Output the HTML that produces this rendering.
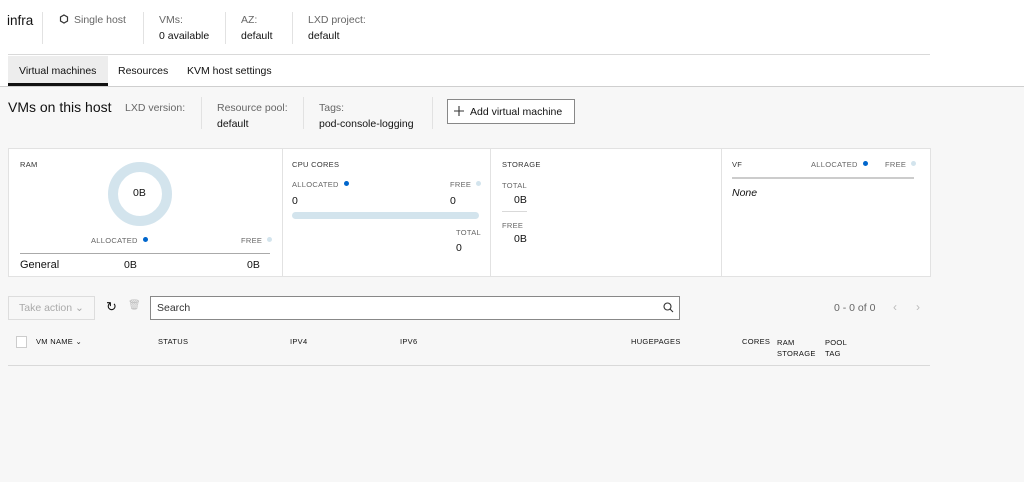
<!DOCTYPE html>
<html><head><meta charset="utf-8"><style>
*{margin:0;padding:0;box-sizing:border-box}
body{width:1024px;height:482px;background:#f7f7f7;font-family:"Liberation Sans",sans-serif;color:#111;position:relative;overflow:hidden;font-size:10.5px}
.a{position:absolute;white-space:nowrap}
.g{color:#666}
.sm{font-size:7.5px;letter-spacing:.3px}
.vl{position:absolute;width:1px;background:#e2e2e2}
.hl{position:absolute;height:1px;background:#d9d9d9}
.dot{display:inline-block;width:5px;height:5px;border-radius:50%;margin-left:5px;vertical-align:1px}
.b{background:#0066cc}.l{background:#d3e4ed}
</style></head><body>
<div class="a" style="left:0;top:0;width:1024px;height:87px;background:#fff"></div>
<div class="a" style="left:7px;top:13px;font-size:13.5px">infra</div>
<div class="vl" style="left:42px;top:12px;height:32px"></div>
<svg class="a" style="left:59px;top:14px" width="10" height="10" viewBox="0 0 10 10"><path d="M5 1 L8.5 3 L8.5 7 L5 9 L1.5 7 L1.5 3 Z" fill="none" stroke="#333" stroke-width="1.2"/></svg>
<div class="a g" style="left:74px;top:14px">Single host</div>
<div class="vl" style="left:143px;top:12px;height:32px"></div>
<div class="a g" style="left:159px;top:14px">VMs:</div>
<div class="a" style="left:159px;top:30px">0 available</div>
<div class="vl" style="left:225px;top:12px;height:32px"></div>
<div class="a g" style="left:241px;top:14px">AZ:</div>
<div class="a" style="left:241px;top:30px">default</div>
<div class="vl" style="left:292px;top:12px;height:32px"></div>
<div class="a g" style="left:308px;top:14px">LXD project:</div>
<div class="a" style="left:308px;top:30px">default</div>
<div class="hl" style="left:8px;top:54px;width:922px"></div>
<div class="a" style="left:8px;top:56px;width:100px;height:30px;background:#ededed;border-bottom:3px solid #111"></div>
<div class="a" style="left:19px;top:65px">Virtual machines</div>
<div class="a" style="left:118px;top:65px">Resources</div>
<div class="a" style="left:187px;top:65px">KVM host settings</div>
<div class="hl" style="left:0;top:86px;width:1024px;background:#cfcfcf"></div>

<div class="a" style="left:8px;top:99px;font-size:14px">VMs on this host</div>
<div class="a g" style="left:125px;top:102px">LXD version:</div>
<div class="vl" style="left:201px;top:97px;height:32px"></div>
<div class="a g" style="left:217px;top:102px">Resource pool:</div>
<div class="a" style="left:217px;top:118px">default</div>
<div class="vl" style="left:303px;top:97px;height:32px"></div>
<div class="a g" style="left:319px;top:102px">Tags:</div>
<div class="a" style="left:319px;top:118px">pod-console-logging</div>
<div class="vl" style="left:432px;top:97px;height:32px"></div>
<div class="a" style="left:447px;top:99px;width:128px;height:25px;border:1px solid #888;background:#fff"></div>
<svg class="a" style="left:454px;top:106px" width="10" height="10" viewBox="0 0 10 10"><path d="M5 0V10M0 5H10" stroke="#333" stroke-width="1.1"/></svg>
<div class="a" style="left:470px;top:106px">Add virtual machine</div>

<div class="a" style="left:8px;top:148px;width:923px;height:129px;background:#fff;border:1px solid #e2e2e2"></div>
<div class="vl" style="left:282px;top:148px;height:129px"></div>
<div class="vl" style="left:490px;top:148px;height:129px"></div>
<div class="vl" style="left:721px;top:148px;height:129px"></div>

<div class="a sm" style="left:20px;top:160px;color:#333">RAM</div>
<div class="a" style="left:108px;top:162px;width:64px;height:64px;border-radius:50%;border:10px solid #d3e4ed"></div>
<div class="a" style="left:133px;top:187px">0B</div>
<div class="a sm g" style="left:91px;top:236px">ALLOCATED<span class="dot b"></span></div>
<div class="a sm g" style="left:241px;top:236px">FREE<span class="dot l"></span></div>
<div class="hl" style="left:20px;top:253px;width:250px;background:#aaa"></div>
<div class="a" style="left:20px;top:259px;font-size:11px">General</div>
<div class="a" style="left:124px;top:259px">0B</div>
<div class="a" style="left:247px;top:259px">0B</div>

<div class="a sm" style="left:292px;top:160px;color:#333">CPU CORES</div>
<div class="a sm g" style="left:292px;top:180px">ALLOCATED<span class="dot b"></span></div>
<div class="a sm g" style="left:450px;top:180px">FREE<span class="dot l"></span></div>
<div class="a" style="left:292px;top:195px">0</div>
<div class="a" style="left:450px;top:195px">0</div>
<div class="a" style="left:292px;top:212px;width:187px;height:7px;border-radius:4px;background:#d3e4ed"></div>
<div class="a sm g" style="left:456px;top:228px">TOTAL</div>
<div class="a" style="left:456px;top:242px">0</div>

<div class="a sm" style="left:502px;top:160px;color:#333">STORAGE</div>
<div class="a sm g" style="left:502px;top:181px">TOTAL</div>
<div class="a" style="left:514px;top:194px">0B</div>
<div class="hl" style="left:502px;top:211px;width:25px"></div>
<div class="a sm g" style="left:502px;top:221px">FREE</div>
<div class="a" style="left:514px;top:233px">0B</div>

<div class="a sm" style="left:732px;top:160px;color:#333">VF</div>
<div class="a sm g" style="left:811px;top:160px">ALLOCATED<span class="dot b"></span></div>
<div class="a sm g" style="left:885px;top:160px">FREE<span class="dot l"></span></div>
<div class="hl" style="left:732px;top:177px;width:182px;background:#ccc;height:1.5px"></div>
<div class="a" style="left:732px;top:187px;font-style:italic">None</div>

<div class="a" style="left:8px;top:296px;width:87px;height:24px;border:1px solid #ddd"></div>
<div class="a" style="left:19px;top:302px;color:#aaa">Take action &#8964;</div>
<div class="a" style="left:106px;top:299px;font-size:13px">&#8635;</div>
<div class="a" style="left:128px;top:300px;color:#bbb;font-size:10px">&#128465;</div>
<div class="a" style="left:150px;top:296px;width:530px;height:24px;border:1px solid #888;background:#fff"></div>
<div class="a" style="left:157px;top:302px;color:#333">Search</div>
<svg class="a" style="left:663px;top:302px" width="11" height="11" viewBox="0 0 11 11"><circle cx="4.5" cy="4.5" r="3.5" fill="none" stroke="#333" stroke-width="1.1"/><path d="M7 7 L10 10" stroke="#333" stroke-width="1.1"/></svg>
<div class="a g" style="left:834px;top:302px">0 - 0 of 0</div>
<div class="a" style="left:893px;top:300px;color:#bbb;font-size:12px">&#8249;</div>
<div class="a" style="left:916px;top:300px;color:#bbb;font-size:12px">&#8250;</div>

<div class="a" style="left:16px;top:336px;width:11px;height:12px;border:1px solid #ccc;background:#fff"></div>
<div class="a sm" style="left:36px;top:337px">VM NAME &#8964;</div>
<div class="a sm" style="left:158px;top:337px">STATUS</div>
<div class="a sm" style="left:290px;top:337px">IPV4</div>
<div class="a sm" style="left:400px;top:337px">IPV6</div>
<div class="a sm" style="left:631px;top:337px">HUGEPAGES</div>
<div class="a sm" style="left:742px;top:337px">CORES</div>
<div class="a sm" style="left:777px;top:337px;line-height:11px">RAM<br>STORAGE</div>
<div class="a sm" style="left:825px;top:337px;line-height:11px">POOL<br>TAG</div>
<div class="hl" style="left:8px;top:365px;width:922px"></div>
</body></html>
